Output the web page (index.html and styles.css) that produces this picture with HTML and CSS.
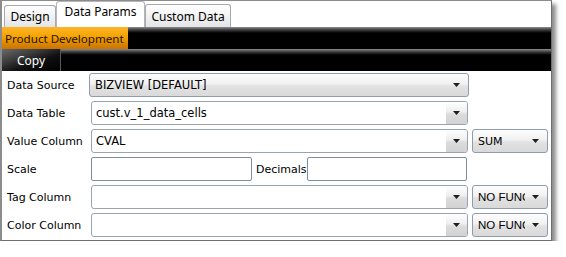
FILE: index.html
```html
<!DOCTYPE html>
<html>
<head>
<meta charset="utf-8">
<link rel="stylesheet" href="styles.css">
</head>
<body>
<div class="window">
  <div class="tabs">
    <div class="tab tab-design">Design</div>
    <div class="tab tab-active">Data Params</div>
    <div class="tab tab-custom">Custom Data</div>
  </div>
  <div class="bar bar-title">
    <div class="title-tab">Product Development</div>
  </div>
  <div class="bar bar-tools">
    <div class="copy-btn">Copy</div>
  </div>
  <div class="content">
    <div class="row">
      <div class="label">Data Source</div>
      <div class="combo combo-ro combo-wide">
        <span class="ctext">BIZVIEW [DEFAULT]</span>
        <span class="arrow"><svg width="7" height="4" viewBox="0 0 7 4"><path d="M0 0h7L3.5 4z"/></svg></span>
      </div>
    </div>
    <div class="row">
      <div class="label">Data Table</div>
      <div class="combo combo-ed">
        <span class="ctext">cust.v_1_data_cells</span>
        <span class="dbtn"><svg width="7" height="4" viewBox="0 0 7 4"><path d="M0 0h7L3.5 4z"/></svg></span>
      </div>
    </div>
    <div class="row">
      <div class="label">Value Column</div>
      <div class="combo combo-ed">
        <span class="ctext">CVAL</span>
        <span class="dbtn"><svg width="7" height="4" viewBox="0 0 7 4"><path d="M0 0h7L3.5 4z"/></svg></span>
      </div>
      <div class="combo combo-ro combo-fn">
        <span class="ctext fn-text">SUM</span>
        <span class="arrow"><svg width="7" height="4" viewBox="0 0 7 4"><path d="M0 0h7L3.5 4z"/></svg></span>
      </div>
    </div>
    <div class="row">
      <div class="label">Scale</div>
      <div class="textbox tb-scale"></div>
      <div class="label-inline">Decimals</div>
      <div class="textbox tb-dec"></div>
    </div>
    <div class="row">
      <div class="label">Tag Column</div>
      <div class="combo combo-ed">
        <span class="ctext"></span>
        <span class="dbtn"><svg width="7" height="4" viewBox="0 0 7 4"><path d="M0 0h7L3.5 4z"/></svg></span>
      </div>
      <div class="combo combo-ro combo-fn">
        <span class="ctext fn-text nofn">NO FUNC</span>
        <span class="arrow"><svg width="7" height="4" viewBox="0 0 7 4"><path d="M0 0h7L3.5 4z"/></svg></span>
      </div>
    </div>
    <div class="row">
      <div class="label">Color Column</div>
      <div class="combo combo-ed">
        <span class="ctext"></span>
        <span class="dbtn"><svg width="7" height="4" viewBox="0 0 7 4"><path d="M0 0h7L3.5 4z"/></svg></span>
      </div>
      <div class="combo combo-ro combo-fn">
        <span class="ctext fn-text nofn">NO FUNC</span>
        <span class="arrow"><svg width="7" height="4" viewBox="0 0 7 4"><path d="M0 0h7L3.5 4z"/></svg></span>
      </div>
    </div>
  </div>
</div>
</body>
</html>
```

FILE: styles.css
```css
* { box-sizing: border-box; }
html, body { margin: 0; padding: 0; background: #fff; }
body { font-family: "DejaVu Sans", Verdana, sans-serif; font-size: 11px; color: #000; }

.window {
  width: 552px;
  border-top: 1px solid #8c8c8c;
  border-left: 2px solid #8c8c8c;
  border-right: 1px solid #6e6e6e;
  border-bottom: 1px solid #6e6e6e;
  background: #fff;
  box-shadow: 4px 4px 4px rgba(0, 0, 0, 0.45);
}

/* tabs */
.tabs {
  display: flex;
  align-items: flex-end;
  height: 26px;
  padding-left: 2px;
  font-family: "Noto Sans", "Open Sans", sans-serif;
  font-size: 12px;
}
.tab {
  display: flex;
  justify-content: center;
  border: 1px solid #a6a9ae;
  border-bottom: none;
  border-radius: 3px 3px 0 0;
  background: linear-gradient(#ffffff, #f2f2f2 50%, #e3e4e6);
  color: #000;
}
.tab-design { width: 52px; height: 22px; padding-top: 2px; }
.tab-active {
  width: 89px; height: 26px; padding-top: 1px;
  background: #fff;
  border-color: #b4b6ba;
}
.tab-custom { width: 86px; height: 23px; padding-top: 3px; }

/* black bars */
.bar {
  display: flex;
  height: 22px;
  background: linear-gradient(#8e8e8e 0px, #3a3a3a 3px, #000 6px, #000 100%);
}
.title-tab {
  width: 126px;
  display: flex;
  align-items: center;
  padding-left: 3px;
  font-family: "Noto Sans", "Open Sans", sans-serif;
  font-size: 11.6px;
  color: #231400;
  background: linear-gradient(#fbb52a, #f6a300 45%, #d98200 80%, #c87400);
}
.copy-btn {
  width: 59px;
  display: flex;
  align-items: center;
  justify-content: center;
  font-family: "Noto Sans", "Open Sans", sans-serif;
  font-size: 12px;
  color: #fff;
  border-right: 1px solid #5a5a5a;
  background: linear-gradient(160deg, #6a6a6a 0%, #3a3a3a 35%, #111 60%, #000 100%);
}

/* form */
.content {
  display: flex;
  flex-direction: column;
  gap: 4px;
  padding: 2px 0 3px 5px;
}
.row {
  display: flex;
  align-items: center;
  height: 24px;
}
.label { width: 82px; }
.label-inline { width: 55px; padding-left: 4px; }

.combo {
  height: 24px;
  display: flex;
  align-items: center;
  border-radius: 3px;
  overflow: hidden;
}
.ctext { flex: 1; font-size: 11.5px; white-space: nowrap; overflow: hidden; }
.combo-ro {
  border: 1px solid #8e9cab;
  background: linear-gradient(#fdfdfd, #f1f1f1 45%, #e2e2e2 55%, #d9d9d9);
}
.combo-ro .ctext { padding-left: 5px; }
.combo-wide { width: 380px; }
.arrow { width: 20px; display: flex; justify-content: center; padding-right: 4px; }
.arrow svg, .dbtn svg { fill: #1e1e1e; display: block; }

.combo-ed {
  width: 377px;
  margin-left: 2px;
  border: 1px solid #98a4b0;
  background: #fff;
}
.combo-ed .ctext { padding-left: 4px; }
.dbtn {
  width: 21px;
  align-self: stretch;
  display: flex;
  align-items: center;
  justify-content: center;
  background: linear-gradient(#ffffff, #eeeeee 45%, #dcdcdc 55%, #d2d2d2);
}

.combo-fn { width: 76px; margin-left: 4px; }
.fn-text { font-size: 11px; padding-left: 5px; }
.nofn {
  font-family: "Liberation Sans", Arial, sans-serif;
  font-size: 11.5px;
  flex: none;
  width: 52px;
  padding-left: 4px;
  text-overflow: clip;
}
.combo-fn .arrow { flex: none; margin-left: auto; }

.textbox {
  height: 24px;
  border: 1px solid #7f8e9d;
  border-radius: 2px;
  background: #fff;
}
.tb-scale { width: 161px; margin-left: 2px; }
.tb-dec { width: 160px; }
```
